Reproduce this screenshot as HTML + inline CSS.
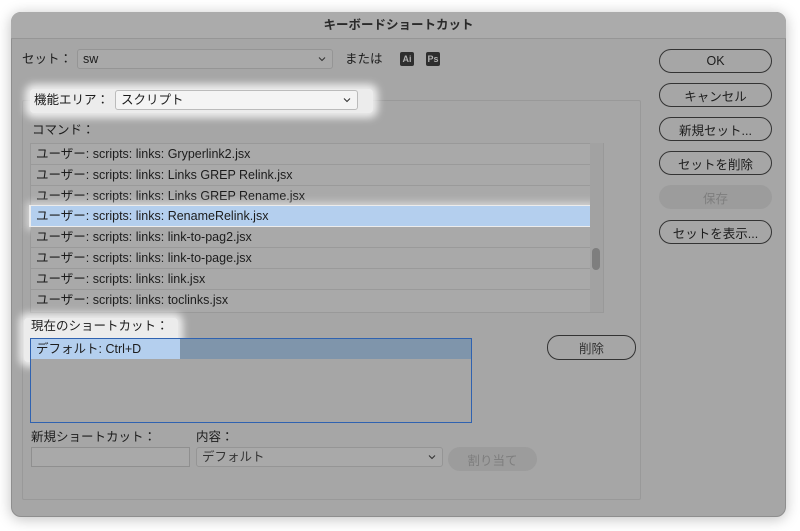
<!DOCTYPE html>
<html><head><meta charset="utf-8"><style>
*{box-sizing:border-box;margin:0;padding:0}
body{width:800px;height:531px;background:#fff;position:relative;overflow:hidden;font-family:"Liberation Sans","Noto Sans CJK JP",sans-serif;font-size:12.5px;color:#1c1c1c}
.a{position:absolute}
.win{left:11px;top:12px;width:775px;height:505px;border-radius:10px;background:#a6a6a6;box-shadow:0 2px 14px rgba(0,0,0,.25);border:1px solid #8e8e8e}
.title{left:11px;top:12px;width:775px;height:27px;border-radius:10px 10px 0 0;background:#ababab;border-bottom:1px solid #969696;text-align:center;line-height:27px;font-weight:bold;font-size:12.5px;color:#2a2a2a}
.sel{background:#a9a9a9;border:1px solid #959595;border-radius:3px;height:20px;line-height:19px;padding-left:5px}
.chev{position:absolute;right:6px;top:6px}
.btn{left:659px;width:113px;height:24px;border:1.5px solid #333;border-radius:12px;display:flex;align-items:center;justify-content:center;font-size:12.5px}
.dis{border:none;background:#9c9c9c;color:#7e7e7e}
.row{left:31px;width:559px;height:21px;line-height:21px;padding-left:5px;border-bottom:1px solid #9a9a9a;background:#a9a9a9}
.glow{background:#ececec;box-shadow:0 0 8px 5px rgba(255,255,255,.8)}
.icon{width:14px;height:14px;background:#2e2e2e;border-radius:2px;color:#b0b0b0;font-size:9px;font-weight:bold;text-align:center;line-height:14px}
.lbl{line-height:16px}
</style></head><body>
<div class="a win"></div>
<div class="a title">キーボードショートカット</div>
<div class="a lbl" style="left:22px;top:51px">セット：</div>
<div class="a sel" style="left:77px;top:49px;width:256px">sw<svg class="chev" width="8" height="6"><path d="M1 1.5L4 4.5L7 1.5" stroke="#333" fill="none" stroke-width="1.1"/></svg></div>
<div class="a lbl" style="left:345px;top:51px">または</div>
<div class="a icon" style="left:400px;top:52px">Ai</div>
<div class="a icon" style="left:426px;top:52px">Ps</div>

<div class="a" style="left:22px;top:100px;width:619px;height:400px;border:1px solid #999;border-radius:2px"></div>

<div class="a glow" style="left:30px;top:89px;width:343px;height:24px;border-radius:4px"></div>
<div class="a lbl" style="left:34px;top:92px">機能エリア：</div>
<div class="a sel" style="left:115px;top:90px;width:243px;background:#f4f4f4;border-color:#bbb">スクリプト<svg class="chev" width="8" height="6"><path d="M1 1.5L4 4.5L7 1.5" stroke="#333" fill="none" stroke-width="1.1"/></svg></div>

<div class="a lbl" style="left:32px;top:122px">コマンド：</div>
<div class="a" style="left:30px;top:143px;width:574px;height:170px;background:#a9a9a9;border:1px solid #999"></div>
<div class="a row" style="top:144px">ユーザー: scripts: links: Gryperlink2.jsx</div>
<div class="a row" style="top:165px">ユーザー: scripts: links: Links GREP Relink.jsx</div>
<div class="a row" style="top:186px">ユーザー: scripts: links: Links GREP Rename.jsx</div>
<div class="a" style="left:29px;top:205px;width:564px;height:22px;background:#ececec;box-shadow:0 0 7px 3px rgba(255,255,255,.5)"></div>
<div class="a row" style="top:206px;background:#b4cfee;border:none;height:20px;line-height:20px">ユーザー: scripts: links: RenameRelink.jsx</div>
<div class="a row" style="top:227px">ユーザー: scripts: links: link-to-pag2.jsx</div>
<div class="a row" style="top:248px">ユーザー: scripts: links: link-to-page.jsx</div>
<div class="a row" style="top:269px">ユーザー: scripts: links: link.jsx</div>
<div class="a row" style="top:290px;border:none">ユーザー: scripts: links: toclinks.jsx</div>
<div class="a" style="left:590px;top:143px;width:13px;height:169px;background:#a2a2a2"></div>
<div class="a" style="left:592px;top:248px;width:8px;height:22px;border-radius:4px;background:#7e7e7e"></div>

<div class="a glow" style="left:24px;top:318px;width:154px;height:44px;border-radius:4px"></div>
<div class="a lbl" style="left:31px;top:318px">現在のショートカット：</div>
<div class="a" style="left:30px;top:338px;width:442px;height:85px;border:1px solid #2f62b0;background:#a6a6a6"></div>
<div class="a" style="left:31px;top:339px;width:440px;height:20px;background:#7f95ab"></div>
<div class="a" style="left:31px;top:339px;width:149px;height:20px;background:#b4cfee;padding-left:5px;line-height:20px">デフォルト: Ctrl+D</div>
<div class="a btn" style="left:547px;top:335px;width:89px;height:25px;color:#333">削除</div>

<div class="a lbl" style="left:31px;top:429px">新規ショートカット：</div>
<div class="a lbl" style="left:196px;top:429px">内容：</div>
<div class="a" style="left:31px;top:447px;width:159px;height:20px;border:1px solid #8f8f8f;background:#a9a9a9"></div>
<div class="a sel" style="left:196px;top:447px;width:247px;color:#333">デフォルト<svg class="chev" width="8" height="6"><path d="M1 1.5L4 4.5L7 1.5" stroke="#333" fill="none" stroke-width="1.1"/></svg></div>
<div class="a btn dis" style="left:448px;top:447px;width:89px">割り当て</div>

<div class="a btn" style="top:49px">OK</div>
<div class="a btn" style="top:83px">キャンセル</div>
<div class="a btn" style="top:117px">新規セット...</div>
<div class="a btn" style="top:151px">セットを削除</div>
<div class="a btn dis" style="top:185px">保存</div>
<div class="a btn" style="top:220px">セットを表示...</div>
</body></html>
